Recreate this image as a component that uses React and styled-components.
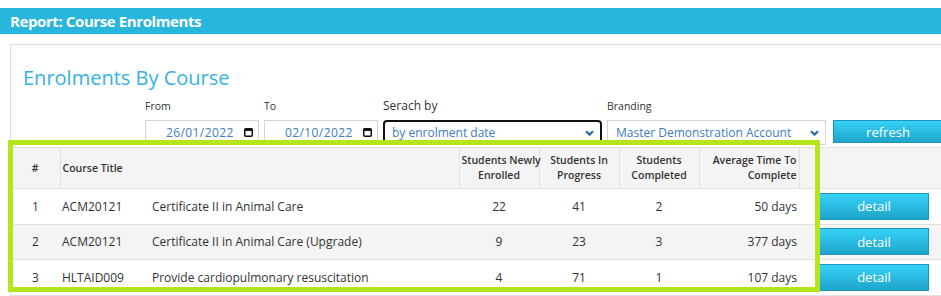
import React from 'react'
import styled, {createGlobalStyle} from 'styled-components'

const GlobalStyle = createGlobalStyle`
body{
    margin:0;
    background:#fff;
    font-family:"Open Sans", "Liberation Sans", sans-serif;
    color:#333;
    overflow:hidden;
}
`
const Page = styled.div`
padding-top:8px;
width:941px;
`
const TopBar = styled.div`
height:26px;
background:#29b6dc;
color:#fff;
font-weight:700;
font-size:15px;
letter-spacing:-0.4px;
display:flex;
align-items:center;
padding-left:10px;
`
const Panel = styled.div`
margin:10px 0 0 10px;
width:1000px;
border:1px solid #dedede;
border-right:none;
border-bottom:none;
padding-top:19px;
`
const Title = styled.h2`
margin:0 0 0 12px;
font-weight:400;
font-size:20px;
line-height:27px;
color:#35b3de;
`
const Filters = styled.div`
display:flex;
align-items:flex-end;
gap:5px;
margin:7px 0 0 134px;
`
const Field = styled.div`
display:flex;
flex-direction:column;
`
const Label = styled.label`
font-size:${props => props.big ? '12px' : '10.5px'};
color:#333;
line-height:16px;
margin-bottom:6px;
`
const DateBox = styled.div`
box-sizing:border-box;
width:114px;
height:25px;
border:1px solid #d4d4d4;
display:flex;
align-items:center;
padding:0 5px 0 20px;
font-size:12px;
letter-spacing:0.4px;
color:#3d7cc0;
svg{
    margin-left:auto;
}
`
const SelectBox = styled.div`
box-sizing:border-box;
width:${props => props.width}px;
height:25px;
border:${props => props.focused ? '2px solid #111' : '1px solid #d4d4d4'};
border-radius:${props => props.focused ? '4px' : '0'};
display:flex;
align-items:center;
padding:${props => props.focused ? '0 6px 0 7px' : '0 6px 0 8px'};
font-size:12px;
color:#3d7cc0;
svg{
    margin-left:auto;
}
`
const Button = styled.button`
box-sizing:border-box;
width:110px;
height:${props => props.tall ? '27px' : '23px'};
border:1px solid #1b95b8;
background:linear-gradient(#36d2f8, #1fa4ca);
color:#fff;
font-family:inherit;
font-size:13px;
padding:0;
cursor:pointer;
`
const RefreshButton = styled(Button)`
margin:0 0 2px 2px;
`
const TableWrap = styled.div`
position:relative;
margin-top:2px;
`
const Highlight = styled.div`
position:absolute;
left:-3px;
top:-7px;
width:812px;
height:152px;
box-sizing:border-box;
border:5px solid #b5e61d;
pointer-events:none;
`
const Table = styled.table`
border-collapse:collapse;
table-layout:fixed;
width:1000px;
font-size:12px;
`
const HeadCell = styled.th`
height:40px;
padding:0 2px;
background:#f4f4f4;
border-top:1px solid #e2e2e2;
border-bottom:1px solid #e2e2e2;
border-right:${props => props.last ? 'none' : '1px solid #e2e2e2'};
font-size:10.5px;
font-weight:600;
line-height:15px;
color:#333;
text-align:${props => props.align || 'center'};
white-space:nowrap;
`
const Row = styled.tr`
background:${props => props.striped ? '#f4f4f4' : '#fff'};
`
const Cell = styled.td`
height:34.5px;
padding:0 2px;
border-bottom:1px solid #e2e2e2;
text-align:${props => props.align || 'left'};
color:#333;
white-space:nowrap;
`
const TitleCell = styled(Cell)`
padding-left:4px;
`
const ActionCell = styled(Cell)`
padding-left:20px;
`

const Calendar = () => (
    <svg width="9" height="9" viewBox="0 0 9 9">
        <rect x="0.75" y="0.75" width="7.5" height="7.5" rx="1" fill="none" stroke="#111" strokeWidth="1.5"/>
        <rect x="0.75" y="0.75" width="7.5" height="2.2" fill="#111"/>
    </svg>
)
const Chevron = () => (
    <svg width="9" height="6" viewBox="0 0 9 6">
        <path d="M1 1.2 L4.5 4.6 L8 1.2" fill="none" stroke="#2f6b9e" strokeWidth="2.2"/>
    </svg>
)

const rows = [
    {code:'ACM20121', title:'Certificate II in Animal Care', newly:22, progress:41, completed:2, avg:'50 days'},
    {code:'ACM20121', title:'Certificate II in Animal Care (Upgrade)', newly:9, progress:23, completed:3, avg:'377 days'},
    {code:'HLTAID009', title:'Provide cardiopulmonary resuscitation', newly:4, progress:71, completed:1, avg:'107 days'},
]

const App = () => {
  return (
    <Page>
        <GlobalStyle />
        <TopBar>Report: Course Enrolments</TopBar>
        <Panel>
            <Title>Enrolments By Course</Title>
            <Filters>
                <Field>
                    <Label>From</Label>
                    <DateBox>26/01/2022<Calendar /></DateBox>
                </Field>
                <Field>
                    <Label>To</Label>
                    <DateBox>02/10/2022<Calendar /></DateBox>
                </Field>
                <Field>
                    <Label big>Serach by</Label>
                    <SelectBox width={219} focused>by enrolment date<Chevron /></SelectBox>
                </Field>
                <Field>
                    <Label>Branding</Label>
                    <SelectBox width={219}>Master Demonstration Account<Chevron /></SelectBox>
                </Field>
                <RefreshButton>refresh</RefreshButton>
            </Filters>
            <TableWrap>
                <Table>
                    <colgroup>
                        <col style={{width:49}}/>
                        <col style={{width:88}}/>
                        <col style={{width:311}}/>
                        <col style={{width:80}}/>
                        <col style={{width:80}}/>
                        <col style={{width:80}}/>
                        <col style={{width:100}}/>
                        <col />
                    </colgroup>
                    <thead>
                        <tr>
                            <HeadCell>#</HeadCell>
                            <HeadCell colSpan={2} align="left">Course Title</HeadCell>
                            <HeadCell>Students Newly<br/>Enrolled</HeadCell>
                            <HeadCell>Students In<br/>Progress</HeadCell>
                            <HeadCell>Students<br/>Completed</HeadCell>
                            <HeadCell align="right">Average Time To<br/>Complete</HeadCell>
                            <HeadCell last></HeadCell>
                        </tr>
                    </thead>
                    <tbody>
                        {rows.map((r, i) => (
                            <Row key={i} striped={i % 2 === 1}>
                                <Cell align="center">{i + 1}</Cell>
                                <Cell>{r.code}</Cell>
                                <TitleCell>{r.title}</TitleCell>
                                <Cell align="center">{r.newly}</Cell>
                                <Cell align="center">{r.progress}</Cell>
                                <Cell align="center">{r.completed}</Cell>
                                <Cell align="right">{r.avg}</Cell>
                                <ActionCell><Button tall>detail</Button></ActionCell>
                            </Row>
                        ))}
                    </tbody>
                </Table>
                <Highlight />
            </TableWrap>
        </Panel>
    </Page>
  )
}

export default App
